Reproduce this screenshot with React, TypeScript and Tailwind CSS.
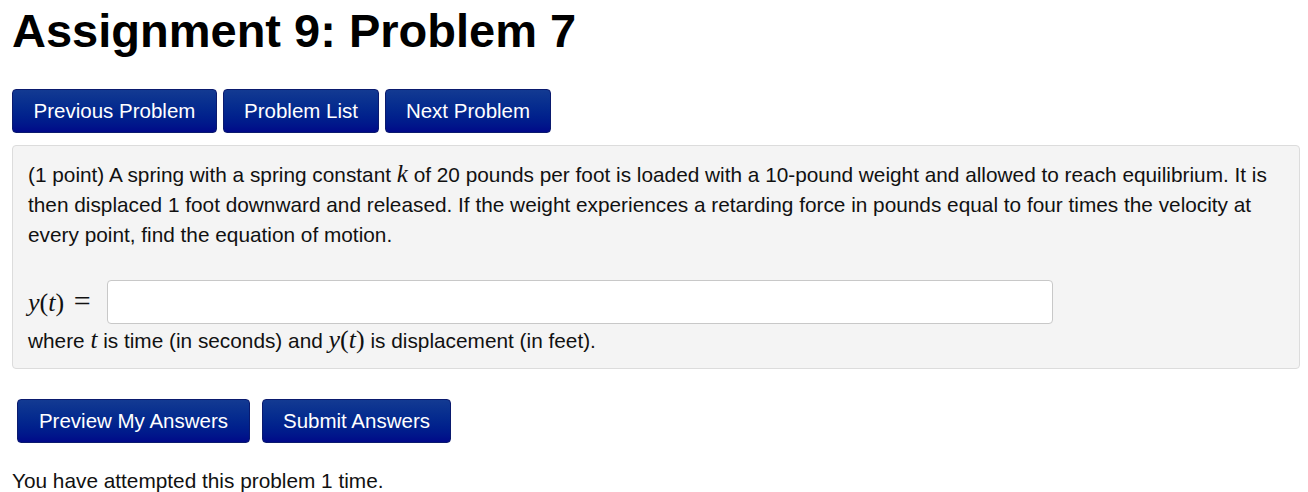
const btn =
  'h-[44px] rounded-[4px] border border-[#0a1a6e] bg-gradient-to-b from-[#133a92] to-[#000889] text-white text-[20.5px] leading-none'

function M({ children }: { children: React.ReactNode }) {
  return <span className="font-['Liberation_Serif',serif] italic text-[25px] leading-none">{children}</span>
}

export default function App() {
  return (
    <div className="font-['Liberation_Sans',Arial,sans-serif] text-[#111] px-[12px] bg-white min-h-[492px]">
      <h1 className="pt-[5px] text-[47px] font-bold leading-[52px] text-black">Assignment 9: Problem 7</h1>

      <div className="mt-[32px] flex gap-[6px]">
        <button className={btn + ' w-[205px]'}>Previous Problem</button>
        <button className={btn + ' w-[156px]'}>Problem List</button>
        <button className={btn + ' w-[166px]'}>Next Problem</button>
      </div>

      <div className="mt-[12px] w-[1288px] h-[224px] rounded-[4px] border border-[#dcdcdc] bg-[#f4f4f4] pl-[15px] pr-[10px] pt-[14px] text-[20.8px] leading-[30px]">
        <p>
          (1 point) A spring with a spring constant <M>k</M> of 20 pounds per foot is loaded with a 10-pound weight and
          allowed to reach equilibrium. It is then displaced 1 foot downward and released. If the weight experiences a
          retarding force in pounds equal to four times the velocity at every point, find the equation of motion.
        </p>
        <div className="mt-[30px] flex items-center">
          <span className="font-['Liberation_Serif',serif] text-[26px] w-[79px] whitespace-nowrap">
            <i>y</i>(<i>t</i>) <span className="ml-[3px] text-[30px] leading-none">=</span>
          </span>
          <input className="h-[44px] w-[946px] rounded-[4px] border border-[#c8c8c8] bg-white" />
        </div>
        <p className="mt-[2px]">
          where <M>t</M> is time (in seconds) and{' '}
          <span className="font-['Liberation_Serif',serif] text-[26px] leading-none">
            <i>y</i>(<i>t</i>)
          </span>{' '}
          is displacement (in feet).
        </p>
      </div>

      <div className="mt-[30px] ml-[5px] flex gap-[12px]">
        <button className={btn + ' w-[233px]'}>Preview My Answers</button>
        <button className={btn + ' w-[189px]'}>Submit Answers</button>
      </div>

      <p className="mt-[26px] text-[20.8px] leading-[24px]">You have attempted this problem 1 time.</p>
    </div>
  )
}
